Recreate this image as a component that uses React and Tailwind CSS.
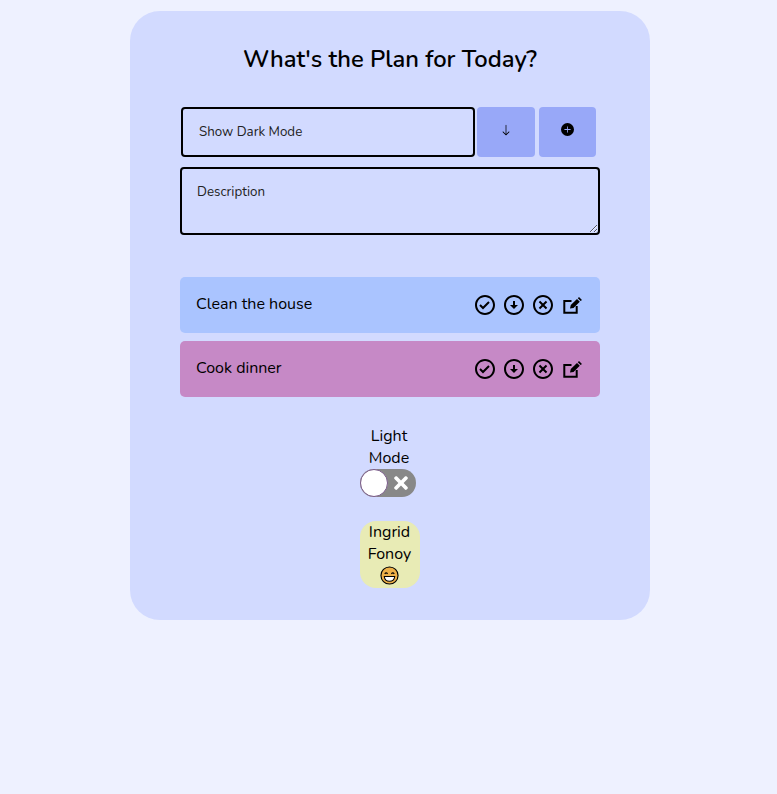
import { BsArrowDown, BsPlusCircleFill } from "react-icons/bs";
import { BiCheckCircle, BiDownArrowCircle, BiXCircle } from "react-icons/bi";
import { FaTimes } from "react-icons/fa";

const font = "font-['Nunito','Lato','Noto_Sans',sans-serif]";

function Laugh() {
  return (
    <svg viewBox="0 0 20 20" className="w-[19px] h-[19px]">
      <circle cx="10" cy="10" r="9" fill="#eeb048" stroke="#000" strokeWidth="1.2" />
      <path d="M5 8.200q1.500-2 3 0M12 8.200q1.500-2 3 0" fill="none" stroke="#000" strokeWidth="1.2" />
      <path d="M4.500 11h11q-.5 5-5.500 5t-5.500-5z" fill="#fff" stroke="#000" strokeWidth="1.100" />
    </svg>
  );
}

function EditIcon() {
  return (
    <svg viewBox="0 0 20 19" className="w-5 h-[19px]">
      <path d="M8.500 5H1.300V16.700H13.700V10" fill="none" stroke="#000" strokeWidth="2" />
      <path d="M7 12.500L7.800 9L14 3L16.800 5.800L10.500 12Z M14.800 2.200L16 1L19 4L17.600 5Z" fill="#000" />
    </svg>
  );
}

function Task({ title, color }) {
  return (
    <div className={`flex items-center justify-between h-14 rounded-[5px] pl-4 pr-4 text-black ${color}`}>
      <span className="text-base -mt-0.5">{title}</span>
      <div className="flex items-center gap-[5px] text-2xl">
        <BiCheckCircle />
        <BiDownArrowCircle />
        <BiXCircle />
        <div className="w-6 flex justify-end pr-px">
          <EditIcon />
        </div>
      </div>
    </div>
  );
}

export default function App() {
  return (
    <div className={`min-h-screen bg-[#eef1ff] pt-[11px] ${font}`}>
      <div className="ml-[130px] w-[520px] h-[609px] rounded-[30px] bg-[#d2daff] px-[50px] pt-8">
        <h1 className="text-[23.75px] font-semibold text-center text-black leading-8">What's the Plan for Today?</h1>

        <div className="flex mt-[32px] h-[50px]">
          <input
            readOnly
            placeholder="Show Dark Mode"
            className="ml-px w-[294px] h-full rounded border-2 border-black bg-transparent pl-4 text-[13.33px] placeholder:text-[#222] outline-none"
          />
          <button className="ml-0.5 w-[58px] h-full rounded bg-[#98a8f8] flex justify-center pt-[17px] text-xs text-black">
            <BsArrowDown />
          </button>
          <button className="ml-1 w-[57px] h-full rounded bg-[#98a8f8] flex justify-center pt-4 text-[13px] text-black">
            <BsPlusCircleFill />
          </button>
        </div>

        <textarea
          readOnly
          placeholder="Description"
          className="block mt-2.5 w-[420px] h-[68px] rounded border-2 border-black bg-transparent pl-[15px] pr-4 py-[14px] text-[13.33px] placeholder:text-[#222] outline-none"
        />

        <div className="mt-[42px] flex flex-col gap-2">
          <Task title="Clean the house" color="bg-[#aac4ff]" />
          <Task title="Cook dinner" color="bg-[#c689c6]" />
        </div>

        <div className="mt-[28px] pr-0.5 flex flex-col items-center text-black text-base leading-[22px]">
          <div className="w-14 text-center">Light Mode</div>
          <div className="flex items-center w-14 h-7 mr-0.5 rounded-full bg-[#888]">
            <div className="w-7 h-7 rounded-full bg-white border border-[#7a5a8a]" />
            <FaTimes className="ml-[3px] text-white text-xl" />
          </div>
        </div>

        <div className="mt-6 mx-auto w-[60px] h-[67px] rounded-2xl bg-[#e8ebb5] pr-px flex flex-col items-center text-center text-black text-base leading-[22px]">
          <span>Ingrid Fonoy</span>
          <div className="mt-px"><Laugh /></div>
        </div>
      </div>
    </div>
  );
}
